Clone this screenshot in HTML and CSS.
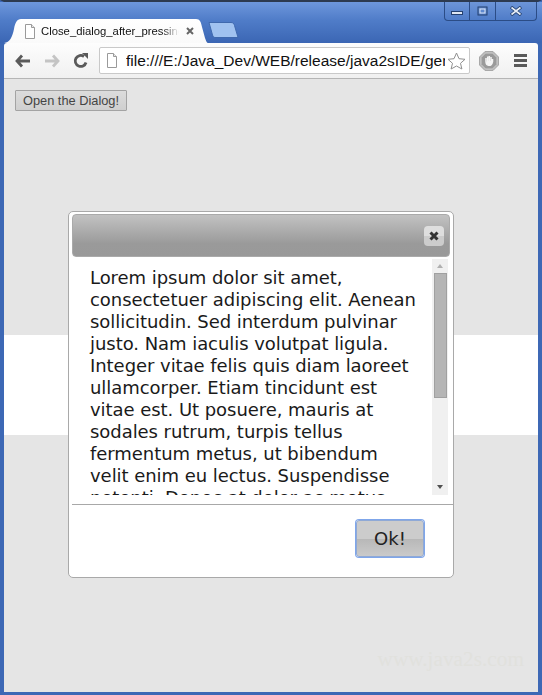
FILE: index.html
```html
<!DOCTYPE html>
<html>
<head>
<meta charset="utf-8">
<title>Close dialog</title>
<link rel="stylesheet" href="styles.css">
</head>
<body>
<div class="window">
  <div class="tabstrip">
    <div class="tab">
      <svg class="docicon" width="12" height="15" viewBox="0 0 12 15"><path d="M1.5 .5H7.5L10.5 3.5V14.5H1.5Z" fill="#fff" stroke="#9a9a9a"/><path d="M7.5 .5V3.5H10.5" fill="#e8e8e8" stroke="#9a9a9a"/></svg>
      <span class="tabtitle">Close_dialog_after_pressing</span>
      <svg class="tabclose" width="8" height="8" viewBox="0 0 8 8"><path d="M1 1L7 7M7 1L1 7" stroke="#666" stroke-width="2"/></svg>
    </div>
    <svg class="newtab" width="31" height="16" viewBox="0 0 31 16"><path d="M1 .5H23C25 .5 26 1.500 26.500 3.500L30 15.500H7C5.500 15.500 5 14.500 4.500 13Z" fill="#a0c2f0" stroke="#3f69ae"/></svg>
    <div class="winbtns">
      <span class="winbtn wb1"><svg width="12" height="5" viewBox="0 0 12 5"><rect x=".5" y=".5" width="11" height="3" fill="#dfe7f3" stroke="#24406f"/></svg></span>
      <span class="winbtn wb2"><svg width="11" height="10" viewBox="0 0 11 10"><rect x="1" y="1" width="9" height="8" fill="none" stroke="#24406f" stroke-width="1"/><rect x="3" y="3" width="5" height="4" fill="none" stroke="#dfe7f3"/></svg></span>
      <span class="winbtn wb3"><svg width="14" height="10" viewBox="0 0 14 10"><path d="M2 1L12 9M12 1L2 9" stroke="#24406f" stroke-width="3.400"/><path d="M2.500 1.500L11.500 8.500M11.500 1.500L2.500 8.500" stroke="#e6edf7" stroke-width="1.600"/></svg></span>
    </div>
  </div>
  <div class="toolbar">
    <svg class="tool" width="16" height="14" viewBox="0 0 16 14"><path d="M7 1.500L2 7L7 12.500M2.500 7H15" fill="none" stroke="#5a5a5a" stroke-width="2.800"/></svg>
    <svg class="tool" width="16" height="14" viewBox="0 0 16 14"><path d="M9 1.500L14 7L9 12.500M13.500 7H1" fill="none" stroke="#c4c4c4" stroke-width="2.800"/></svg>
    <svg class="tool" width="16" height="16" viewBox="0 0 16 16"><path d="M13 9.500A5.500 5.500 0 1 1 11 3.500" fill="none" stroke="#5a5a5a" stroke-width="2.800"/><path d="M9 0H15V6Z" fill="#5a5a5a"/></svg>
    <div class="omnibox">
      <svg class="docicon" width="12" height="15" viewBox="0 0 12 15"><path d="M1.500 .5H7.500L10.500 3.500V14.500H1.500Z" fill="#fff" stroke="#9a9a9a"/><path d="M7.500 .5V3.500H10.500" fill="#e8e8e8" stroke="#9a9a9a"/></svg>
      <span class="url">file:///E:/Java_Dev/WEB/release/java2sIDE/generated</span>
      <svg class="star" width="19" height="18" viewBox="0 0 19 18"><path d="M9.500 1L12 6.700L18 7.300L13.500 11.300L14.900 17L9.500 14L4.100 17L5.500 11.300L1 7.300L7 6.700Z" fill="#fff" stroke="#8f8f8f"/></svg>
    </div>
    <svg class="abp" width="20" height="20" viewBox="0 0 20 20"><path d="M6 .5H14L19.500 6V14L14 19.500H6L.5 14V6Z" fill="#b5b5b5" stroke="#a8a8a8"/><path d="M6.500 2H13.500L18 6.500V13.500L13.500 18H6.500L2 13.500V6.500Z" fill="#9a9a9a" stroke="#cdcdcd"/><path d="M7 11V7M8.700 10V5.500M10.300 10V5M12 10V6M13.500 11V8M7 10.500C7 15 12 16 13.500 11" fill="none" stroke="#f4f4f4" stroke-width="1.500"/><path d="M7.500 10H13V13L10 15L8 13Z" fill="#f4f4f4"/></svg>
    <div class="menu"><i></i><i></i><i></i></div>
  </div>
  <div class="page">
    <button class="open">Open the Dialog!</button>
    <div class="stripe"></div>
    <div class="mark">www.java2s.com</div>
    <div class="dialog">
      <div class="dhead">
        <button class="dclose" aria-label="Close">
          <svg width="10" height="10" viewBox="0 0 10 10"><path d="M1.500 1.500L8.500 8.500M8.500 1.500L1.500 8.500" stroke="#333" stroke-width="3"/></svg>
        </button>
      </div>
      <div class="dbody">
        <div class="dcontent">
          <p>Lorem ipsum dolor sit amet, consectetuer adipiscing elit. Aenean sollicitudin. Sed interdum pulvinar justo. Nam iaculis volutpat ligula. Integer vitae felis quis diam laoreet ullamcorper. Etiam tincidunt est vitae est. Ut posuere, mauris at sodales rutrum, turpis tellus fermentum metus, ut bibendum velit enim eu lectus. Suspendisse potenti. Donec at dolor ac metus pharetra aliquam.</p>
        </div>
        <div class="sbar">
          <span class="arrow up"></span>
          <span class="thumb"></span>
          <span class="arrow down"></span>
        </div>
      </div>
      <div class="dfoot"><button class="ok">Ok!</button></div>
    </div>
  </div>
</div>
</body>
</html>
```
FILE: styles.css
```css
html, body { margin: 0; padding: 0; height: 100%; overflow: hidden; background: #3a66b5; }
button { padding: 0; margin: 0; cursor: default; }

.window {
  width: 542px; height: 695px; box-sizing: border-box;
  display: flex; flex-direction: column;
  border-top: 2px solid #2d3a50;
  border-left: 4px solid #3d68b5; border-right: 4px solid #3d68b5; border-bottom: 3px solid #3d68b5;
  background: #3d68b5;
}
.tabstrip {
  height: 41px; flex: none; display: flex; align-items: flex-end; position: relative;
  margin: 0 -4px; padding-left: 4px;
  background: linear-gradient(#6e97dc 0, #4f7cc8 45%, #3b66b4 100%);
}
.tab {
  width: 204px; height: 24px; box-sizing: border-box; flex: none;
  display: flex; align-items: center; padding: 0 14px 0 20px;
  background: linear-gradient(#fff, #fafafa);
  clip-path: path("M0 24C6 23 8 19 10 10C11 4 13 0 17 0L192 0C196 0 197 3 198 8L201 19C202 22 203 24 204 24Z");
}
.tab .docicon { flex: none; }
.tabtitle {
  font: 11.300px "Liberation Sans", sans-serif; color: #111; white-space: nowrap; overflow: hidden;
  width: 138px; margin-left: 5px; flex: none;
  -webkit-mask-image: linear-gradient(90deg, #000 88%, transparent);
  mask-image: linear-gradient(90deg, #000 88%, transparent);
}
.tabclose { margin-left: 7px; flex: none; }
.newtab { margin: 0 0 5px 0; flex: none; }
.winbtns {
  position: absolute; top: 0; right: 5px; display: flex; height: 18px;
  border: 1px solid #2b4c86; border-top: 0; border-radius: 0 0 4px 4px;
  background: linear-gradient(#6d95d8, #4f7cc8);
}
.winbtn { display: flex; align-items: center; justify-content: center; height: 18px; }
.wb1 { width: 25px; border-right: 1px solid #2b4c86; padding-top: 4px; box-sizing: border-box; }
.wb2 { width: 25px; border-right: 1px solid #2b4c86; }
.wb3 { width: 40px; }

.toolbar {
  height: 36px; flex: none; box-sizing: border-box; display: flex; align-items: center;
  background: linear-gradient(#fdfdfd, #f0f0f0);
  border-bottom: 1px solid #b5b5b5;
  border-radius: 3px 3px 0 0;
  padding: 0 0 0 11px;
}
.tool { flex: none; margin-right: 13px; }
.omnibox {
  width: 371px; height: 27px; box-sizing: border-box; flex: none; margin-left: -3px;
  display: flex; align-items: center; background: #fff;
  border: 1px solid #c9c9c9; border-radius: 2px; padding-left: 6px; position: relative;
  overflow: hidden;
}
.url {
  font: 15.500px "Liberation Sans", sans-serif; color: #111; white-space: nowrap; margin-left: 8px;
  width: 319px; overflow: hidden; flex: none;
}
.star { position: absolute; right: 3px; top: 4px; }
.abp { flex: none; margin-left: 9px; }
.menu { flex: none; margin-left: 15px; width: 13px; display: flex; flex-direction: column; gap: 2px; }
.menu i { display: block; height: 3px; background: #5a5a5a; }

.page { flex: 1; position: relative; background: #e5e5e5; min-height: 0; }
.open {
  position: relative; margin: 11px 0 0 11px; width: 112px; height: 21px; display: block;
  font: 12.800px "Liberation Sans", sans-serif; color: #444;
  background: linear-gradient(#dcdcdc, #cfcfcf);
  border: 1px solid #a3a3a3; border-radius: 1px;
}
.stripe { position: absolute; left: 0; right: 0; top: 256px; height: 100px; background: #fff; }
.mark {
  position: absolute; right: 14px; bottom: 20px;
  font: 21.300px "Liberation Serif", serif; color: #e1e1dd; white-space: nowrap;
}
.dialog {
  position: absolute; left: 64px; top: 132px; width: 386px; height: 367px; box-sizing: border-box;
  background: #fff; border: 1px solid #a9a9a9; border-radius: 5px;
  display: flex; flex-direction: column;
}
.dhead {
  height: 43px; flex: none; box-sizing: border-box; margin: 2px 3px 0 3px;
  display: flex; align-items: center; justify-content: flex-end; padding-right: 5px;
  background: linear-gradient(#c2c2c2, #9a9a9a 70%, #999);
  border: 1px solid #aaa; border-radius: 4px;
}
.dclose {
  width: 20px; height: 20px; display: flex; align-items: center; justify-content: center;
  border: 0; border-radius: 4px; background: linear-gradient(#dedede 50%, #cccccc 50%);
  margin-top: 1px;
}
.dbody { height: 236px; flex: none; display: flex; padding-right: 5px; margin-top: 2px; overflow: hidden; }
.dcontent { flex: 1; min-width: 0; padding: 8px 13px 0 21px; overflow: hidden; }
.dcontent p {
  margin: 0; font: 18px/22px "DejaVu Sans", Verdana, sans-serif; color: #1a1a1a; letter-spacing: -.05px;
}
.sbar { width: 16px; flex: none; background: #f0f0f0; display: flex; flex-direction: column; align-items: center; position: relative; }
.thumb { width: 13px; height: 125px; box-sizing: border-box; background: #b5b5b5; border: 1px solid #a0a0a0; margin-top: 5px; }
.arrow { width: 0; height: 0; border-left: 3.500px solid transparent; border-right: 3.500px solid transparent; }
.arrow.up { border-bottom: 4px solid #b0b0b0; margin-top: 5px; }
.arrow.down { border-top: 4px solid #505050; position: absolute; bottom: 6px; left: 4.500px; }
.dfoot {
  flex: 1; margin: 9px 0 0 3px; border-top: 1px solid #a8a8a8;
  display: flex; justify-content: flex-end; align-items: flex-start; padding: 15px 29px 0 0;
}
.ok {
  width: 68px; height: 37px; box-sizing: border-box;
  font: 18px "DejaVu Sans", sans-serif; color: #222;
  background: linear-gradient(#cccccc 50%, #b8b8b8 52%, #cacaca);
  border: 1px solid #8fa9d6; border-radius: 3px;
  box-shadow: 0 0 0 1px #7fa6ea;
}
```
